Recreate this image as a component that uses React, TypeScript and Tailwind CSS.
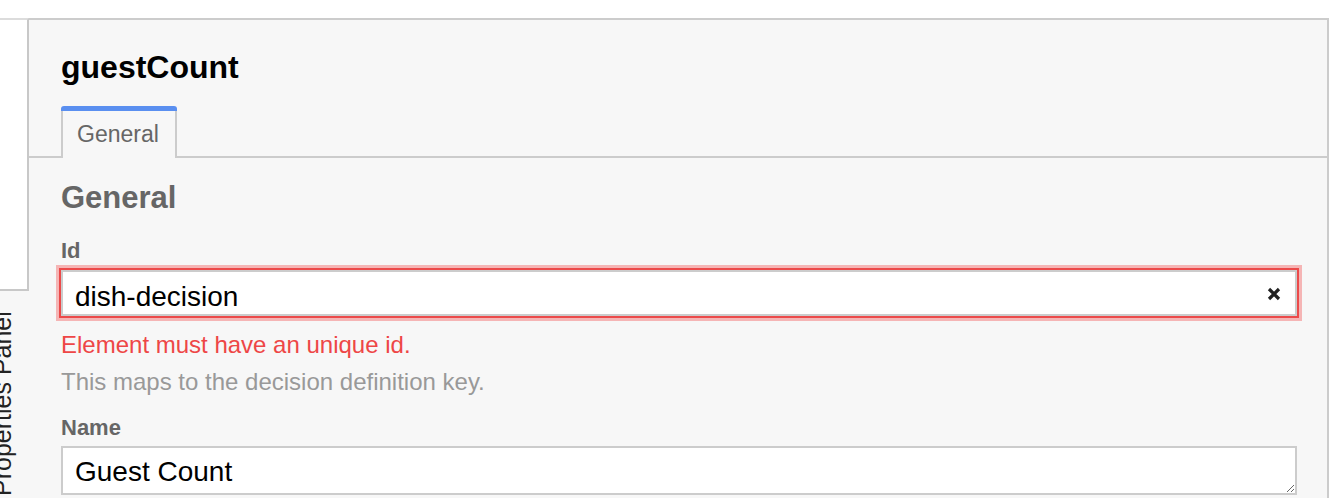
import React from "react";

export default function App() {
  return (
    <div className="w-[1330px] h-[498px] overflow-hidden bg-white pt-[18px] flex font-['Liberation_Sans',Arial,sans-serif]">
      {/* left toggle column */}
      <div className="w-[29px] shrink-0 flex flex-col">
        <div className="h-[273px] shrink-0 bg-white border-t-2 border-r-2 border-b-2 border-t-[#dcdcdc] border-r-[#c8c8c8] border-b-[#c8c8c8]" />
        <div className="flex-1 bg-[#f7f7f7] overflow-hidden">
          <div className="w-max whitespace-nowrap text-[25px] leading-[25px] text-[#222] origin-top-left [transform:translate(-10px,205px)_rotate(-90deg)]">
            Properties Panel
          </div>
        </div>
      </div>

      {/* panel */}
      <div className="flex-1 mr-[1px] bg-[#f7f7f7] border-t-2 border-r-2 border-[#cccccc] flex flex-col">
        <div className="pl-[32px] pr-[30px] pt-[29px]">
          <h1 className="text-[32px] leading-[37px] font-bold text-black">guestCount</h1>
        </div>

        <div className="mt-[20px] border-b-2 border-[#cccccc] pl-[32px] flex">
          <div className="-mb-[2px] w-[116px] flex flex-col">
            <div className="h-[5px] rounded-t-[3px] bg-[#5a8ff0]" />
            <div className="flex-1 border-x-2 border-[#cccccc] bg-[#f7f7f7] pl-[14px] pt-[12px] pb-[12px] text-[23px] leading-[23px] text-[#666666]">
              General
            </div>
          </div>
        </div>

        <div className="pl-[32px] pr-[30px] pt-[22px]">
          <h2 className="text-[31px] leading-[36px] font-bold text-[#666666]">General</h2>

          <label className="block mt-[22px] text-[22px] leading-[26px] font-bold text-[#666666]">Id</label>
          <div className="mt-[6px] h-[46px] border-2 border-[#cccccc] bg-white shadow-[0_0_0_2px_#ec4a4a,0_0_0_5px_#f5b5b5] flex items-start pl-[12px] pr-[14px]">
            <span className="flex-1 pt-[8px] text-[28px] leading-[33px] text-black">dish-decision</span>
            <svg className="mt-[15px] shrink-0" width="14" height="14" viewBox="0 0 14 14">
              <path d="M2 2 L12 12 M12 2 L2 12" stroke="#222222" strokeWidth="3.2" strokeLinecap="butt" fill="none" />
            </svg>
          </div>

          <div className="mt-[15px] text-[24px] leading-[28px] text-[#ee4646]">Element must have an unique id.</div>
          <div className="mt-[9px] text-[24px] leading-[28px] text-[#999999]">This maps to the decision definition key.</div>

          <label className="block mt-[19px] text-[22px] leading-[26px] font-bold text-[#666666]">Name</label>
          <textarea
            className="mt-[5px] block w-full h-[49px] border-2 border-[#cccccc] bg-white px-[12px] pt-[7px] text-[28px] leading-[33px] text-black resize-y overflow-hidden outline-none font-['Liberation_Sans',Arial,sans-serif]"
            defaultValue="Guest Count"
            readOnly
          />
        </div>
      </div>
    </div>
  );
}
